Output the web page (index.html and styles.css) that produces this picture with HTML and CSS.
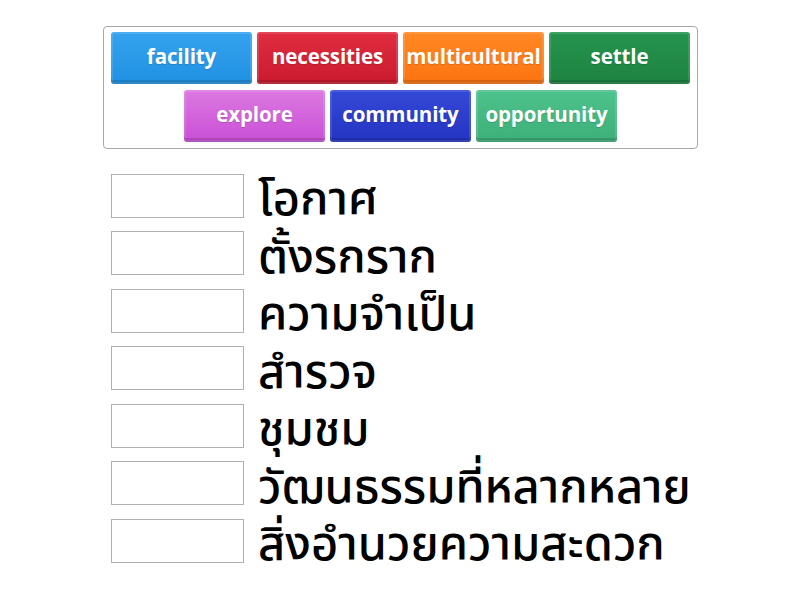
FILE: index.html
```html
<!DOCTYPE html>
<html>
<head>
	<meta charset="utf-8">
	<link rel="stylesheet" href="styles.css">
</head>
<body>
	<div class="page">
		<div class="bank">
			<div class="word blue">facility</div>
			<div class="word red">necessities</div>
			<div class="word orange">multicultural</div>
			<div class="word green">settle</div>
			<div class="word pink">explore</div>
			<div class="word navy">community</div>
			<div class="word mint">opportunity</div>
		</div>
		<div class="rows">
			<div class="row"><div class="slot"></div><span class="label">โอกาศ</span></div>
			<div class="row"><div class="slot"></div><span class="label">ตั้งรกราก</span></div>
			<div class="row"><div class="slot"></div><span class="label">ความจำเป็น</span></div>
			<div class="row"><div class="slot"></div><span class="label">สำรวจ</span></div>
			<div class="row"><div class="slot"></div><span class="label">ชุมชม</span></div>
			<div class="row"><div class="slot"></div><span class="label">วัฒนธรรมที่หลากหลาย</span></div>
			<div class="row"><div class="slot"></div><span class="label">สิ่งอำนวยความสะดวก</span></div>
		</div>
	</div>
</body>
</html>
```

FILE: styles.css
```css
body {
	margin: 0;
	background: #ffffff;
	font-family: "Open Sans", "Noto Sans", sans-serif;
}
.page {
	width: 800px;
	padding-top: 26px;
}
.bank {
	width: 582px;
	margin: 0 auto;
	padding: 5px 5px 6px 6px;
	border: 1px solid #a8a8a8;
	border-radius: 4px;
	display: flex;
	flex-wrap: wrap;
	justify-content: center;
	gap: 6px 5px;
}
.word {
	width: 141px;
	height: 52px;
	box-sizing: border-box;
	border-radius: 3px;
	display: flex;
	align-items: center;
	justify-content: center;
	padding-bottom: 4px;
	color: #ffffff;
	font-weight: bold;
	font-size: 20.5px;
	letter-spacing: -0.1px;
	box-shadow: inset 0 -4px 0 rgba(0, 0, 0, 0.14), inset 0 0 0 2px rgba(255, 255, 255, 0.12);
	text-shadow: 0 1px 1px rgba(0, 0, 0, 0.15);
}
.blue { background: linear-gradient(#35a3ee, #1f91e2); }
.red { background: linear-gradient(#e02d40, #cb1a2e); }
.orange { background: linear-gradient(#ff8824, #fb7411); }
.green { background: linear-gradient(#25944e, #1d8340); }
.pink { background: linear-gradient(#dc79e0, #c94fd6); }
.navy { background: linear-gradient(#3448d6, #2434c3); }
.mint { background: linear-gradient(#4fc38d, #3daf79); }
.rows {
	padding: 25px 0 0 111px;
	display: flex;
	flex-direction: column;
	gap: 14px;
}
.row {
	display: flex;
	align-items: center;
	height: 43.5px;
}
.slot {
	width: 131px;
	height: 42px;
	border: 1px solid #b0b0b0;
	flex: none;
}
.label {
	margin-left: 14px;
	padding-top: 11px;
	line-height: 40px;
	font-family: "Noto Sans Thai", "Noto Sans", sans-serif;
	font-size: 47px;
	font-weight: 500;
	color: #000000;
	white-space: nowrap;
}
```
